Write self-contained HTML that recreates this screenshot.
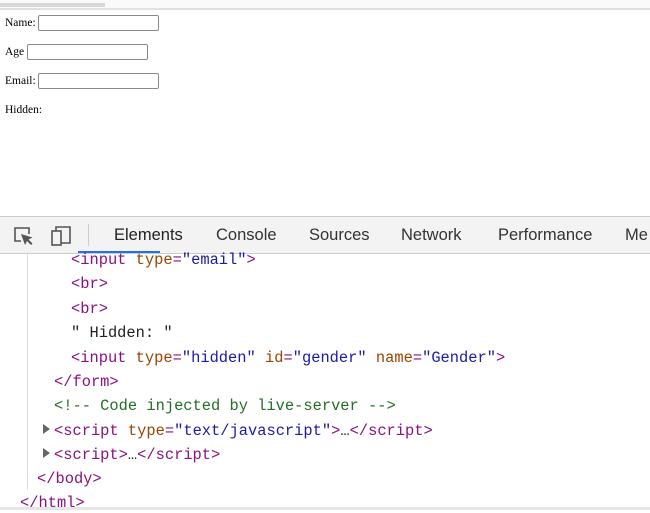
<!DOCTYPE html>
<html><head><style>
*{margin:0;padding:0;box-sizing:border-box}
body{width:650px;height:510px;background:#fff;position:relative;overflow:hidden}
.f{position:absolute;font-family:"Liberation Serif",serif;font-size:11.5px;color:#000}
.in{position:absolute;border:1px solid #8a8a8a;border-radius:2px;height:16px;background:#fff}
.tab{position:absolute;top:226px;font-family:"Liberation Sans",sans-serif;font-size:16.5px;color:#333}
.c{position:absolute;font-family:"Liberation Mono",monospace;font-size:15.4px;white-space:pre;color:#881280;line-height:20px}
.a{color:#994500}.v{color:#1a1aa6}.t{color:#222}.g{color:#236e25}
</style></head><body>
<div style="position:absolute;left:0;top:0;width:650px;height:9px;background:#fafafa"></div>
<div style="position:absolute;left:0;top:3px;width:105px;height:4px;background:#d8d8d8"></div>
<div style="position:absolute;left:0;top:8px;width:650px;height:2px;background:#e0e0e0"></div>
<div class="f" style="left:5px;top:17px">Name:</div><div class="in" style="left:38px;top:15px;width:121px"></div>
<div class="f" style="left:5px;top:46px">Age</div><div class="in" style="left:27px;top:44px;width:121px"></div>
<div class="f" style="left:5px;top:75px">Email:</div><div class="in" style="left:38px;top:73px;width:121px"></div>
<div class="f" style="left:5px;top:104px">Hidden:</div>
<div style="position:absolute;left:0;top:216px;width:650px;height:1px;background:#ccc"></div>
<div style="position:absolute;left:0;top:217px;width:650px;height:36px;background:#f3f3f3"></div>
<div style="position:absolute;left:0;top:253px;width:650px;height:1px;background:#ccc"></div>
<svg style="position:absolute;left:12px;top:225px" width="60" height="22" viewBox="0 0 60 22">
<path d="M9 16H3V3h14v6" fill="none" stroke="#555" stroke-width="1.6"/>
<path d="M9 9l4 11 2-4 4 4 1.5-1.5-4-4 4-2z" fill="#555"/>
<rect x="40" y="6" width="9" height="14" fill="none" stroke="#555" stroke-width="1.6"/>
<path d="M44 6V2h14v16h-9" fill="none" stroke="#555" stroke-width="1.6"/>
</svg>
<div style="position:absolute;left:88px;top:224px;width:1px;height:22px;background:#ccc"></div>
<div class="tab" style="left:114px;color:#222">Elements</div>
<div style="position:absolute;left:78px;top:251px;width:82px;height:2px;background:#1a73e8"></div>
<div class="tab" style="left:216px">Console</div>
<div class="tab" style="left:309px">Sources</div>
<div class="tab" style="left:401px">Network</div>
<div class="tab" style="left:498px">Performance</div>
<div class="tab" style="left:625px">Me</div>
<div style="position:absolute;left:27px;top:254px;width:1px;height:236px;background:#ddd"></div>
<div class="c" style="left:71px;top:250px">&lt;input <span class="a">type</span>=<span class="v">"email"</span>&gt;</div>
<div class="c" style="left:71px;top:274px">&lt;br&gt;</div>
<div class="c" style="left:71px;top:299px">&lt;br&gt;</div>
<div class="c t" style="left:71px;top:323px">" Hidden: "</div>
<div class="c" style="left:71px;top:348px">&lt;input <span class="a">type</span>=<span class="v">"hidden"</span> <span class="a">id</span>=<span class="v">"gender"</span> <span class="a">name</span>=<span class="v">"Gender"</span>&gt;</div>
<div class="c" style="left:54px;top:372px">&lt;/form&gt;</div>
<div class="c g" style="left:54px;top:396px">&lt;!-- Code injected by live-server --&gt;</div>
<div class="c" style="left:54px;top:421px">&lt;script <span class="a">type</span>=<span class="v">"text/javascript"</span>&gt;<span class="t">…</span>&lt;/script&gt;</div>
<div class="c" style="left:54px;top:445px">&lt;script&gt;<span class="t">…</span>&lt;/script&gt;</div>
<div style="position:absolute;left:43px;top:424px;border-left:7px solid #666;border-top:5px solid transparent;border-bottom:5px solid transparent"></div>
<div style="position:absolute;left:43px;top:448px;border-left:7px solid #666;border-top:5px solid transparent;border-bottom:5px solid transparent"></div>
<div class="c" style="left:37px;top:469px">&lt;/body&gt;</div>
<div class="c" style="left:20px;top:493px">&lt;/html&gt;</div>
<div style="position:absolute;left:0;top:507px;width:650px;height:3px;background:#e6e6e6"></div>
</body></html>
